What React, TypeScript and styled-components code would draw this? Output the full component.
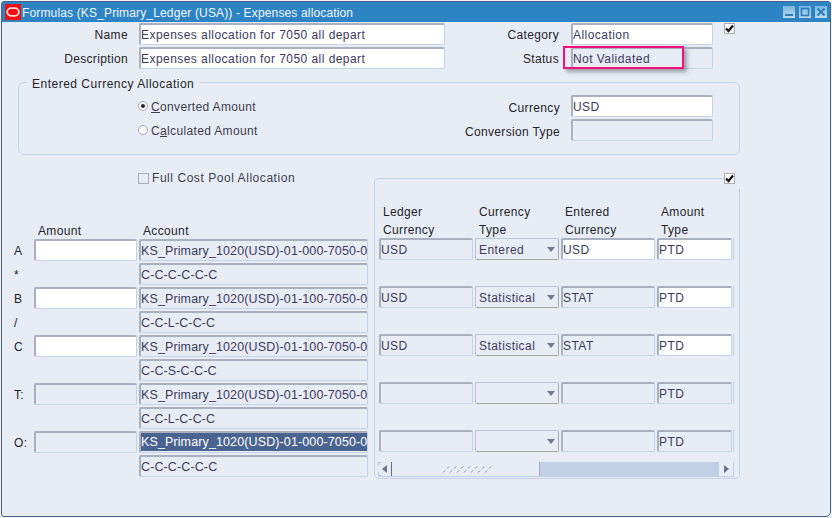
import React from "react";
import styled, { createGlobalStyle } from "styled-components";

const Global = createGlobalStyle`
  html, body { margin: 0; padding: 0; background: #f4f4f6; }
  * { box-sizing: border-box; }
`;

const Page = styled.div`
  width: 832px;
  height: 518px;
  padding: 1px;
  overflow: hidden;
  font-family: "Liberation Sans", Arial, sans-serif;
  font-size: 12px;
  letter-spacing: 0.35px;
  color: #23232b;
`;

const Win = styled.div`
  width: 830px;
  height: 516px;
  background: #e8edf5;
  border: 1px solid #4b5f8a;
  border-radius: 3px 3px 5px 3px;
  display: flex;
  flex-direction: column;
`;

const TitleBar = styled.div`
  height: 20px;
  flex: none;
  background: #2c84c4;
  color: #f2f6fb;
  display: flex;
  align-items: center;
  padding: 0 3px 0 3px;
  font-size: 12px;
  letter-spacing: 0.15px;
  line-height: 20px;
`;

const Logo = styled.svg`
  width: 16px;
  height: 16px;
  flex: none;
  margin-right: 1px;
`;

const TitleText = styled.span`
  flex: 1;
  padding-top: 1px;
`;

const WinButtons = styled.div`
  display: flex;
  gap: 4px;
`;

const WinBtn = styled.svg`
  width: 12px;
  height: 12px;
  display: block;
  background: linear-gradient(#7ab6e0, #bcdaef);
`;

const Body = styled.div`
  flex: 1;
  padding-top: 1px;
  display: flex;
  flex-direction: column;
`;

const FormRow = styled.div`
  display: flex;
  align-items: center;
  height: 22px;
  margin-bottom: 2px;
`;

const Label = styled.label<{ $w: number; $gap: number; $drop?: number }>`
  width: ${(p) => p.$w}px;
  margin-right: ${(p) => p.$gap}px;
  padding-top: ${(p) => p.$drop ?? 2}px;
  text-align: right;
  flex: none;
  white-space: nowrap;
`;

const Field = styled.div<{ $w?: number; $white?: boolean }>`
  width: ${(p) => (p.$w ? `${p.$w}px` : "auto")};
  height: 22px;
  flex: none;
  padding: 0;
  line-height: 20px;
  letter-spacing: 0.45px;
  white-space: nowrap;
  overflow: hidden;
  color: #3c3a5c;
  background: ${(p) => (p.$white ? "#ffffff" : "#e8edf5")};
  border-style: solid;
  border-width: 2px 1px 1px 2px;
  border-color: #a9b1c0 #c3d2e6 #c3d2e6 #a9b1c0;
  border-radius: 2px;
`;

const Selected = styled.span`
  display: block;
  margin: 0;
  height: 18px;
  line-height: 19px;
  background: #4a6491;
  color: #ffffff;
`;

const AccountText = styled.span`
  letter-spacing: 0.12px;
  font-size: 12.5px;
`;

const Check = styled.span<{ $checked?: boolean }>`
  width: 11px;
  height: 11px;
  flex: none;
  display: inline-flex;
  align-items: center;
  justify-content: center;
  border: 1px solid #a8acb4;
  background: ${(p) => (p.$checked ? "#ffffff" : "#e8edf5")};
`;

const TopCheck = styled.span`
  display: inline-flex;
  margin: -12px 0 0 11px;
`;

const Group = styled.div`
  position: relative;
  margin: 11px 0 0 16px;
  width: 722px;
  height: 73px;
  border: 1px solid #c3d2e6;
  border-radius: 6px;
  padding-top: 12px;
`;

const Legend = styled.span`
  position: absolute;
  top: -6px;
  left: 8px;
  padding: 0 5px;
  line-height: 14px;
  letter-spacing: 0.5px;
  background: #e8edf5;
`;

const Radio = styled.span<{ $on?: boolean }>`
  position: relative;
  width: 10px;
  height: 10px;
  flex: none;
  margin: 0 3px 0 119px;
  border-radius: 50%;
  border: 1px solid #a4a8b2;
  background: #fbfcfe;
  &::after {
    content: "";
    display: ${(p) => (p.$on ? "block" : "none")};
    position: absolute;
    left: 2px;
    top: 2px;
    width: 4px;
    height: 4px;
    border-radius: 50%;
    background: #22222a;
  }
`;

const RadioLabel = styled.span`
  width: 136px;
  flex: none;
  padding-top: 2px;
  color: #3c3c50;
  white-space: nowrap;
`;

const Lower = styled.div`
  display: flex;
  align-items: flex-start;
  margin-top: 16px;
`;

const LeftCol = styled.div`
  width: 372px;
  flex: none;
`;

const PoolRow = styled.div`
  display: flex;
  align-items: center;
  height: 12px;
  margin: 1px 0 0 136px;
  line-height: 12px;
  gap: 3px;
  letter-spacing: 0.55px;
  color: #3c3c50;
  white-space: nowrap;
`;

const LeftGrid = styled.div`
  display: grid;
  grid-template-columns: 30px 103px 229px;
  column-gap: 2px;
  row-gap: 2px;
  grid-auto-rows: 22px;
  margin-top: 31px;
  width: 368px;
`;

const HeaderCell = styled.div`
  align-self: end;
  padding-left: 4px;
  line-height: 18px;
  height: 18px;
  margin-bottom: -3px;
  white-space: nowrap;
`;

const RowTag = styled.div`
  line-height: 25px;
  padding-left: 12px;
`;

const Panel = styled.div`
  position: relative;
  margin-top: 7px;
  width: 366px;
  height: 301px;
  border: 1px solid #c3d2e6;
  border-radius: 5px;
  padding: 24px 0 0 4px;
`;

const PanelCheck = styled.div`
  position: absolute;
  top: -8px;
  right: -1px;
  width: 16px;
  height: 18px;
  padding-top: 1px;
  background: #e8edf5;
`;

const TableGrid = styled.div`
  display: grid;
  grid-template-columns: 94px 84px 94px 75px 1px;
  column-gap: 2px;
  row-gap: 26px;
  grid-auto-rows: 22px;
`;

const HeaderRow = styled.div`
  display: grid;
  grid-template-columns: 94px 84px 94px 76px;
  column-gap: 2px;
  height: 35px;
`;

const TwoLine = styled.div`
  padding-left: 4px;
  line-height: 18px;
  white-space: pre-line;
`;

const Select = styled.div`
  position: relative;
  height: 22px;
  padding-left: 3px;
  line-height: 23px;
  letter-spacing: 0.45px;
  color: #3c3a5c;
  background: #e8edf5;
  border-style: solid;
  border-width: 1px;
  border-color: #b9c6da #a8a8a8 #a8a8a8 #b9c6da;
  border-radius: 2px;
  white-space: nowrap;
  &::after {
    content: "";
    position: absolute;
    right: 3px;
    top: 8px;
    border-left: 4px solid transparent;
    border-right: 4px solid transparent;
    border-top: 5px solid #74788e;
  }
`;

const ColumnEdge = styled.div`
  margin-left: -1px;
  width: 1px;
  background: #c3d2e6;
`;

const ScrollBar = styled.div`
  display: flex;
  width: 356px;
  height: 15px;
  margin: 10px 0 0 -1px;
  background: #c1d0e5;
`;

const Thumb = styled.div`
  width: 162px;
  height: 14px;
  display: flex;
  align-items: center;
  background: #e8edf5;
  border-right: 1px solid #9fb0c8;
  border-radius: 6px 0 0 6px;
`;

const ArrowZone = styled.div`
  width: 14px;
  height: 14px;
  flex: none;
  display: flex;
  align-items: center;
  justify-content: center;
  border-right: 1px solid #5f6c86;
`;

const Grip = styled.svg`
  width: 52px;
  height: 10px;
  margin-left: 49px;
`;

const EndButton = styled.div`
  width: 14px;
  height: 14px;
  margin-left: auto;
  margin-right: 1px;
  display: flex;
  align-items: center;
  justify-content: center;
  background: #e8edf5;
`;

const Triangle = styled.span<{ $dir: "left" | "right" }>`
  width: 0;
  height: 0;
  border-top: 4px solid transparent;
  border-bottom: 4px solid transparent;
  ${(p) =>
    p.$dir === "left"
      ? "border-right: 5px solid #6a7388;"
      : "border-left: 5px solid #6a7388;"}
`;

const Highlight = styled.div`
  position: absolute;
  left: 562px;
  top: 45px;
  width: 121px;
  height: 23px;
  border: 2px solid #f0107c;
  box-shadow: 3px 3px 4px rgba(60, 60, 70, 0.45);
  pointer-events: none;
`;

const Stage = styled.div`
  position: relative;
`;

const CheckMark = () => (
  <svg width="9" height="9" viewBox="0 0 9 9">
    <path d="M1 4.5 L3.5 7 L8 1.5" fill="none" stroke="#111" strokeWidth="2.2" />
  </svg>
);

const leftRows: { tag: string; amount?: "white" | "grey"; text: string; selected?: boolean }[] = [
  { tag: "A", amount: "white", text: "KS_Primary_1020(USD)-01-000-7050-0" },
  { tag: "*", text: "C-C-C-C-C-C" },
  { tag: "B", amount: "white", text: "KS_Primary_1020(USD)-01-100-7050-0" },
  { tag: "/", text: "C-C-L-C-C-C" },
  { tag: "C", amount: "white", text: "KS_Primary_1020(USD)-01-100-7050-0" },
  { tag: "", text: "C-C-S-C-C-C" },
  { tag: "T:", amount: "grey", text: "KS_Primary_1020(USD)-01-100-7050-0" },
  { tag: "", text: "C-C-L-C-C-C" },
  { tag: "O:", amount: "grey", text: "KS_Primary_1020(USD)-01-000-7050-0", selected: true },
  { tag: "", text: "C-C-C-C-C-C" },
];

const tableRows = [
  { ledger: "USD", type: "Entered", entered: "USD", enteredWhite: true, amt: "PTD", amtWhite: true },
  { ledger: "USD", type: "Statistical", entered: "STAT", enteredWhite: false, amt: "PTD", amtWhite: true },
  { ledger: "USD", type: "Statistical", entered: "STAT", enteredWhite: false, amt: "PTD", amtWhite: true },
  { ledger: "", type: "", entered: "", enteredWhite: false, amt: "PTD", amtWhite: false },
  { ledger: "", type: "", entered: "", enteredWhite: false, amt: "PTD", amtWhite: false },
];

export default function App() {
  return (
    <Page>
      <Global />
      <Stage>
        <Win>
          <TitleBar>
            <Logo viewBox="0 0 16 16">
              <rect width="16" height="16" fill="#f00f0f" />
              <rect x="2.2" y="4.2" width="11.6" height="7.6" rx="3.8" fill="none" stroke="#ffd8d8" strokeWidth="1.8" />
            </Logo>
            <TitleText>Formulas (KS_Primary_Ledger (USA)) - Expenses allocation</TitleText>
            <WinButtons>
              <WinBtn viewBox="0 0 12 12">
                <rect x="2" y="8" width="8" height="2" fill="#2c7cbc" />
              </WinBtn>
              <WinBtn viewBox="0 0 12 12">
                <rect x="2.5" y="2.5" width="7" height="7" fill="none" stroke="#2c7cbc" strokeWidth="1.6" />
              </WinBtn>
              <WinBtn viewBox="0 0 12 12">
                <path d="M2.5 2.5 L9.5 9.5 M9.5 2.5 L2.5 9.5" stroke="#2c7cbc" strokeWidth="2" />
              </WinBtn>
            </WinButtons>
          </TitleBar>
          <Body>
            <FormRow>
              <Label $w={126} $gap={11}>Name</Label>
              <Field $w={306} $white>Expenses allocation for 7050 all depart</Field>
              <Label $w={114} $gap={12}>Category</Label>
              <Field $w={142} $white>Allocation</Field>
              <TopCheck>
                <Check $checked><CheckMark /></Check>
              </TopCheck>
            </FormRow>
            <FormRow>
              <Label $w={126} $gap={11}>Description</Label>
              <Field $w={306} $white>Expenses allocation for 7050 all depart</Field>
              <Label $w={114} $gap={12}>Status</Label>
              <Field $w={142}>Not Validated</Field>
            </FormRow>
            <Group>
              <Legend>Entered Currency Allocation</Legend>
              <FormRow>
                <Radio $on />
                <RadioLabel><u>C</u>onverted Amount</RadioLabel>
                <Label $w={273} $gap={11} $drop={4}>Currency</Label>
                <Field $w={142} $white>USD</Field>
              </FormRow>
              <FormRow>
                <Radio />
                <RadioLabel>C<u>a</u>lculated Amount</RadioLabel>
                <Label $w={273} $gap={11} $drop={4}>Conversion Type</Label>
                <Field $w={142} />
              </FormRow>
            </Group>
            <Lower>
              <LeftCol>
                <PoolRow>
                  <Check />
                  Full Cost Pool Allocation
                </PoolRow>
                <LeftGrid>
                  <div />
                  <HeaderCell>Amount</HeaderCell>
                  <HeaderCell>Account</HeaderCell>
                  {leftRows.map((r, i) => (
                    <React.Fragment key={i}>
                      <RowTag>{r.tag}</RowTag>
                      {r.amount ? <Field $white={r.amount === "white"} /> : <div />}
                      <Field>
                        {r.selected ? (
                          <Selected><AccountText>{r.text}</AccountText></Selected>
                        ) : (
                          <AccountText>{r.text}</AccountText>
                        )}
                      </Field>
                    </React.Fragment>
                  ))}
                </LeftGrid>
              </LeftCol>
              <Panel>
                <PanelCheck>
                  <Check $checked><CheckMark /></Check>
                </PanelCheck>
                <HeaderRow>
                  <TwoLine>{"Ledger\nCurrency"}</TwoLine>
                  <TwoLine>{"Currency\nType"}</TwoLine>
                  <TwoLine>{"Entered\nCurrency"}</TwoLine>
                  <TwoLine>{"Amount\nType"}</TwoLine>
                </HeaderRow>
                <TableGrid>
                  {tableRows.map((r, i) => (
                    <React.Fragment key={i}>
                      <Field>{r.ledger}</Field>
                      <Select>{r.type}</Select>
                      <Field $white={r.enteredWhite}>{r.entered}</Field>
                      <Field $white={r.amtWhite}>{r.amt}</Field>
                      <ColumnEdge />
                    </React.Fragment>
                  ))}
                </TableGrid>
                <ScrollBar>
                  <Thumb>
                    <ArrowZone><Triangle $dir="left" /></ArrowZone>
                    <Grip viewBox="0 0 52 10">
                      <path
                        d="M2 8.5l2-2M9 8.5l2-2M16 8.5l2-2M23 8.5l2-2M30 8.5l2-2M37 8.5l2-2M44 8.5l2-2M6 4.5l2-2M13 4.5l2-2M20 4.5l2-2M27 4.5l2-2M34 4.5l2-2M41 4.5l2-2M48 4.5l2-2"
                        stroke="#7f8aa0"
                        strokeWidth="1"
                        fill="none"
                      />
                    </Grip>
                  </Thumb>
                  <EndButton><Triangle $dir="right" /></EndButton>
                </ScrollBar>
              </Panel>
            </Lower>
          </Body>
        </Win>
        <Highlight />
      </Stage>
    </Page>
  );
}
